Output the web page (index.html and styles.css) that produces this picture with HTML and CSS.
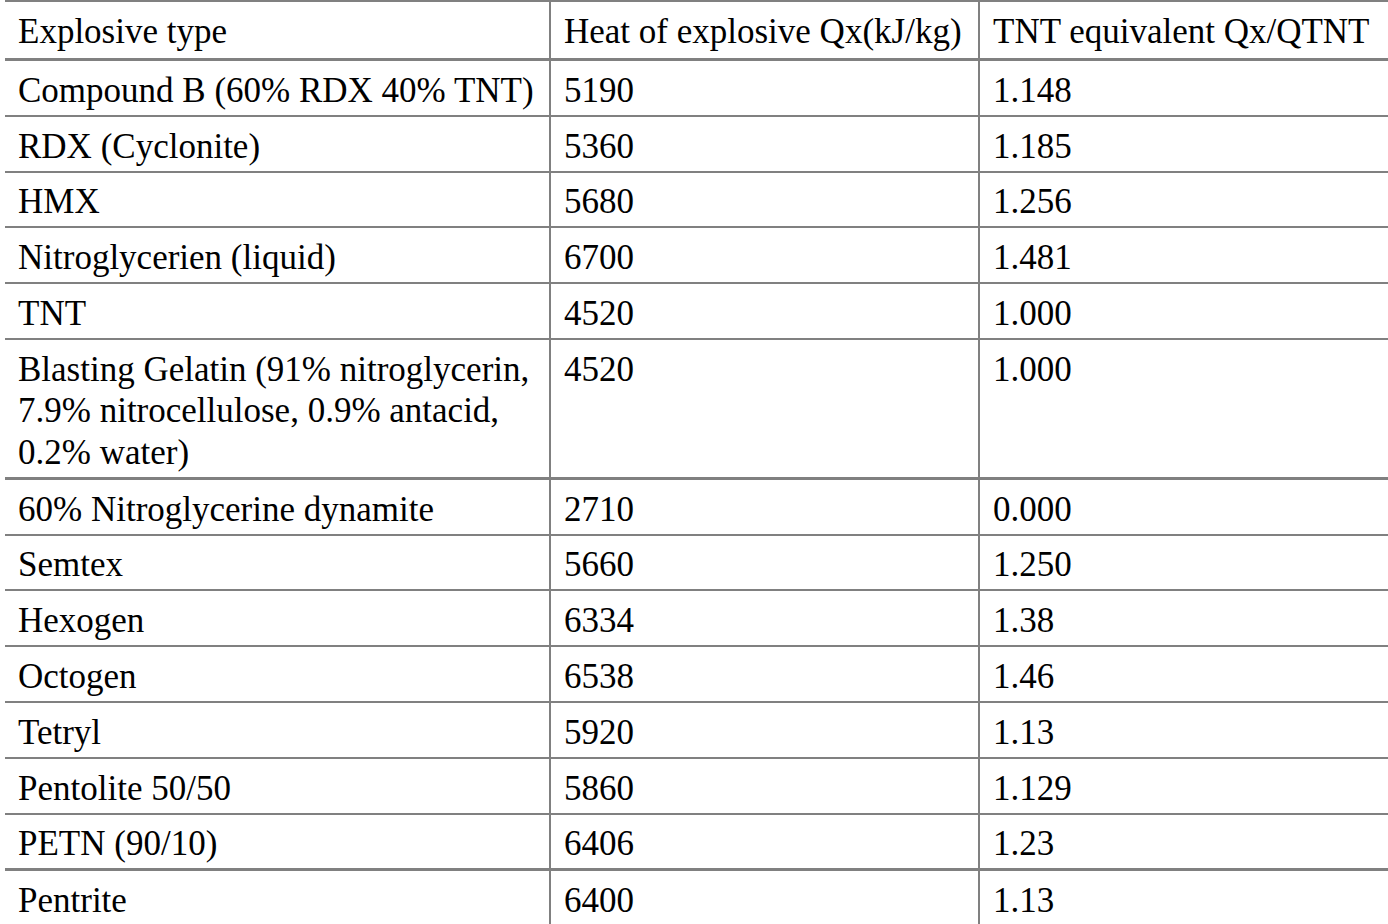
FILE: index.html
```html
<!DOCTYPE html>
<html>
<head>
<meta charset="utf-8">
<link rel="stylesheet" href="styles.css">
</head>
<body>
<table class="data">
  <colgroup>
    <col class="c1"><col class="c2"><col class="c3">
  </colgroup>
  <thead>
    <tr><th>Explosive type</th><th>Heat of explosive Qx(kJ/kg)</th><th>TNT equivalent Qx/QTNT</th></tr>
  </thead>
  <tbody>
    <tr><td>Compound B (60% RDX 40% TNT)</td><td>5190</td><td>1.148</td></tr>
    <tr><td>RDX (Cyclonite)</td><td>5360</td><td>1.185</td></tr>
    <tr><td>HMX</td><td>5680</td><td>1.256</td></tr>
    <tr><td>Nitroglycerien (liquid)</td><td>6700</td><td>1.481</td></tr>
    <tr><td>TNT</td><td>4520</td><td>1.000</td></tr>
    <tr class="thick"><td>Blasting Gelatin (91% nitroglycerin, 7.9% nitrocellulose, 0.9% antacid, 0.2% water)</td><td>4520</td><td>1.000</td></tr>
    <tr><td>60% Nitroglycerine dynamite</td><td>2710</td><td>0.000</td></tr>
    <tr><td>Semtex</td><td>5660</td><td>1.250</td></tr>
    <tr><td>Hexogen</td><td>6334</td><td>1.38</td></tr>
    <tr><td>Octogen</td><td>6538</td><td>1.46</td></tr>
    <tr><td>Tetryl</td><td>5920</td><td>1.13</td></tr>
    <tr><td>Pentolite 50/50</td><td>5860</td><td>1.129</td></tr>
    <tr class="thick"><td>PETN (90/10)</td><td>6406</td><td>1.23</td></tr>
    <tr><td>Pentrite</td><td>6400</td><td>1.13</td></tr>
  </tbody>
</table>
</body>
</html>
```
FILE: styles.css
```css
html, body {
  margin: 0;
  padding: 0;
  background: #ffffff;
}

.data {
  margin-left: 5px;
  width: 1383px;
  table-layout: fixed;
  border-collapse: separate;
  border-spacing: 0;
  font-family: "Liberation Serif", "Times New Roman", serif;
  font-size: 35px;
  line-height: 41.6px;
  color: #000000;
}

.c1 { width: 544px; }
.c2 { width: 429px; }
.c3 { width: 410px; }

.data th,
.data td {
  text-align: left;
  vertical-align: top;
  font-weight: normal;
  padding: 8.8px 8px 3.4px 13px;
  border-bottom: 2px solid #808080;
}

.data th {
  border-top: 2px solid #808080;
  border-bottom: 3px solid #808080;
  padding-top: 9.2px;
  padding-bottom: 5.2px;
}

.data th + th,
.data td + td {
  border-left: 2px solid #808080;
}

.data tr.thick td {
  border-bottom-width: 3px;
}
```
